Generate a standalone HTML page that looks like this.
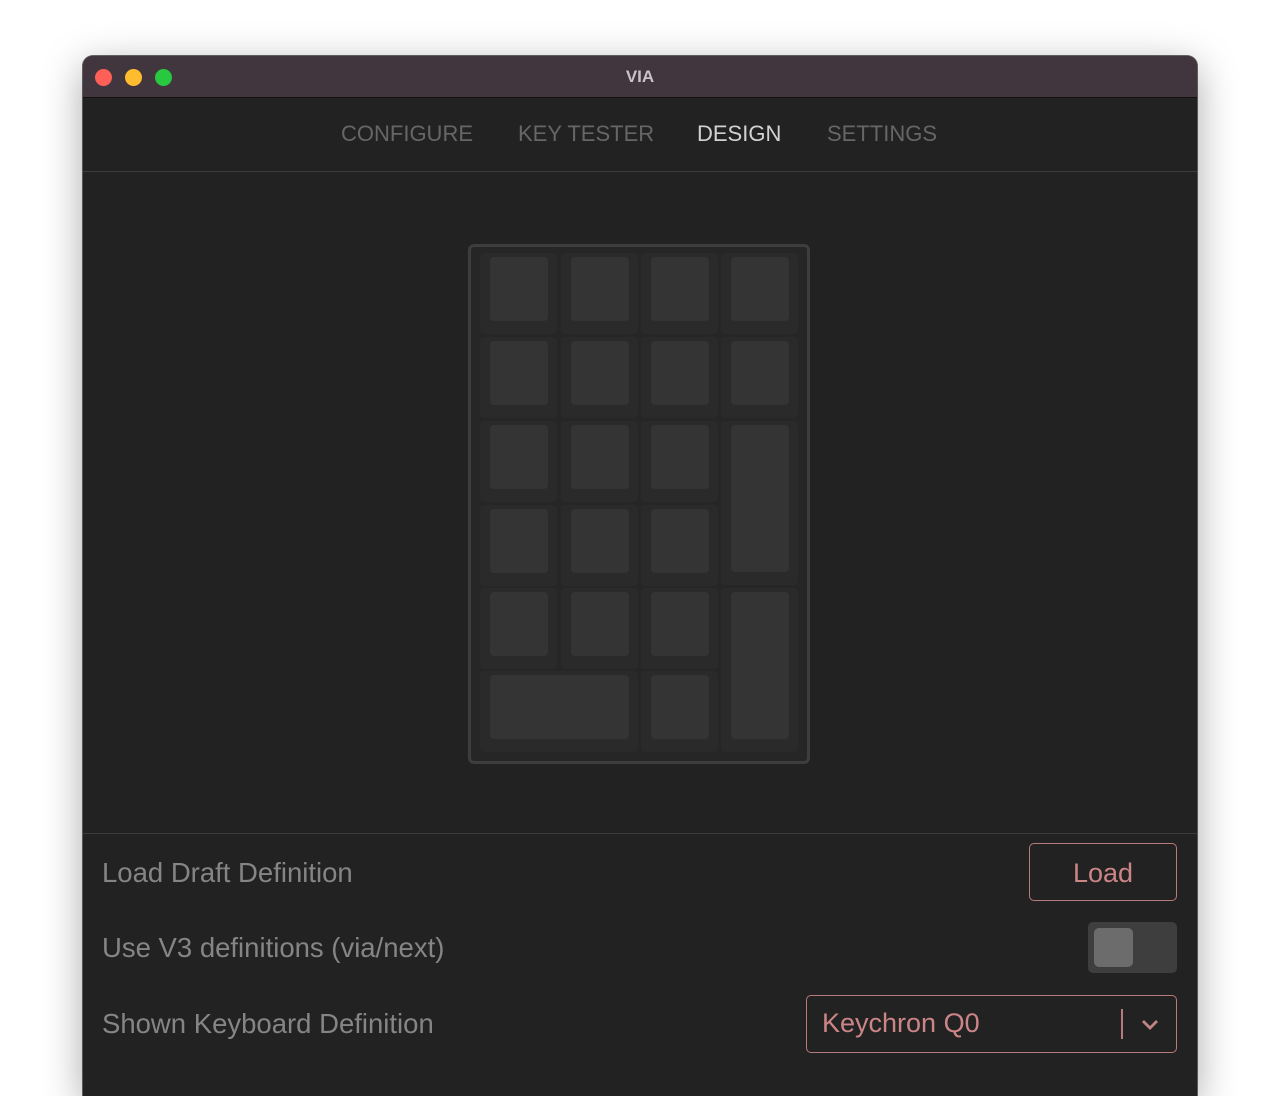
<!DOCTYPE html>
<html><head><meta charset="utf-8"><style>
*{margin:0;padding:0;box-sizing:border-box}
body{width:1280px;height:1067px;background:#fff;position:relative;overflow:hidden;font-family:"Liberation Sans",sans-serif}
.win{position:absolute;left:83px;top:56px;width:1114px;height:1040px;background:#222;border-radius:10px 10px 0 0;box-shadow:0 10px 40px rgba(0,0,0,.35),0 0 0 1px #6a6a6a;overflow:hidden}
.tb{position:absolute;left:0;top:0;width:100%;height:42px;background:#41353e;border-bottom:1px solid #111}
.dot{position:absolute;top:13px;width:17px;height:17px;border-radius:50%}
.title{position:absolute;left:0;width:100%;top:11px;text-align:center;color:#c9c2c7;font-weight:bold;font-size:17px}
.nav{position:absolute;top:43px;left:0;width:100%;height:73px;border-bottom:1px solid #3c3c3c}
.nav span{position:absolute;top:22px;font-size:22px;color:#666}
.a{position:absolute}
.cell{position:absolute;background:#2a2a2a;border-radius:4px}
.cap{position:absolute;background:#353435;border-radius:4px}
.lbl{position:absolute;left:19px;font-size:27.5px;color:#858585}
</style></head><body>
<div class="win">
<div class="tb">
<div class="dot" style="left:12px;background:#fe5f57"></div>
<div class="dot" style="left:42px;background:#febc2e"></div>
<div class="dot" style="left:72px;background:#28c840"></div>
<div class="title">VIA</div>
</div>
<div class="nav">
<span style="left:258px">CONFIGURE</span>
<span style="left:435px">KEY TESTER</span>
<span style="left:614px;color:#d2d2d2">DESIGN</span>
<span style="left:744px">SETTINGS</span>
</div>
<div class="a" style="left:385px;top:188px;width:342px;height:520px;border:3px solid #3d3d3d;border-radius:6px;background:#262626"></div>
<div id="keys"></div>
<div class="a" style="left:0;top:777px;width:100%;height:1px;background:#3c3c3c"></div>
<div class="lbl" style="top:801px">Load Draft Definition</div>
<div class="lbl" style="top:876px">Use V3 definitions (via/next)</div>
<div class="lbl" style="top:952px">Shown Keyboard Definition</div>
<div class="a" style="left:946px;top:787px;width:148px;height:58px;border:1.5px solid #b87a7c;border-radius:5px;color:#cc8587;font-size:27px;text-align:center;line-height:58px">Load</div>
<div class="a" style="left:1005px;top:866px;width:89px;height:51px;background:#3e3e3e;border-radius:5px"><div class="a" style="left:6px;top:6px;width:39px;height:39px;background:#6c6c6c;border-radius:5px"></div></div>
<div class="a" style="left:723px;top:939px;width:371px;height:58px;border:1.5px solid #b87a7c;border-radius:5px">
<div class="a" style="left:15px;top:12px;font-size:27px;color:#cc8587">Keychron Q0</div>
<div class="a" style="left:314px;top:13px;width:1.5px;height:30px;background:#b87a7c"></div>
<svg class="a" style="left:331px;top:19px" width="24" height="18" viewBox="0 0 24 18"><path d="M5 6l7 7 7-7" fill="none" stroke="#c08486" stroke-width="2.8"/></svg>
</div>
</div>
<script>
var k=document.getElementById('keys'),h='';
var xs=[480,561,641,721],ys=[253,337,421,505,588,671];
function key(x,y,w,hh){h+='<div class="cell" style="left:'+(x-83)+'px;top:'+(y-56)+'px;width:'+w+'px;height:'+hh+'px"></div>';
h+='<div class="cap" style="left:'+(x-83+10)+'px;top:'+(y-56+4)+'px;width:'+(w-19)+'px;height:'+(hh-17)+'px"></div>';}
for(var r=0;r<5;r++)for(var c=0;c<3;c++)key(xs[c],ys[r],77,81);
key(xs[3],ys[0],77,81);key(xs[3],ys[1],77,81);
key(xs[3],ys[2],77,164);key(xs[3],ys[4],77,164);
key(xs[0],ys[5],158,81);key(xs[2],ys[5],77,81);
k.innerHTML=h;
</script>
</body></html>
